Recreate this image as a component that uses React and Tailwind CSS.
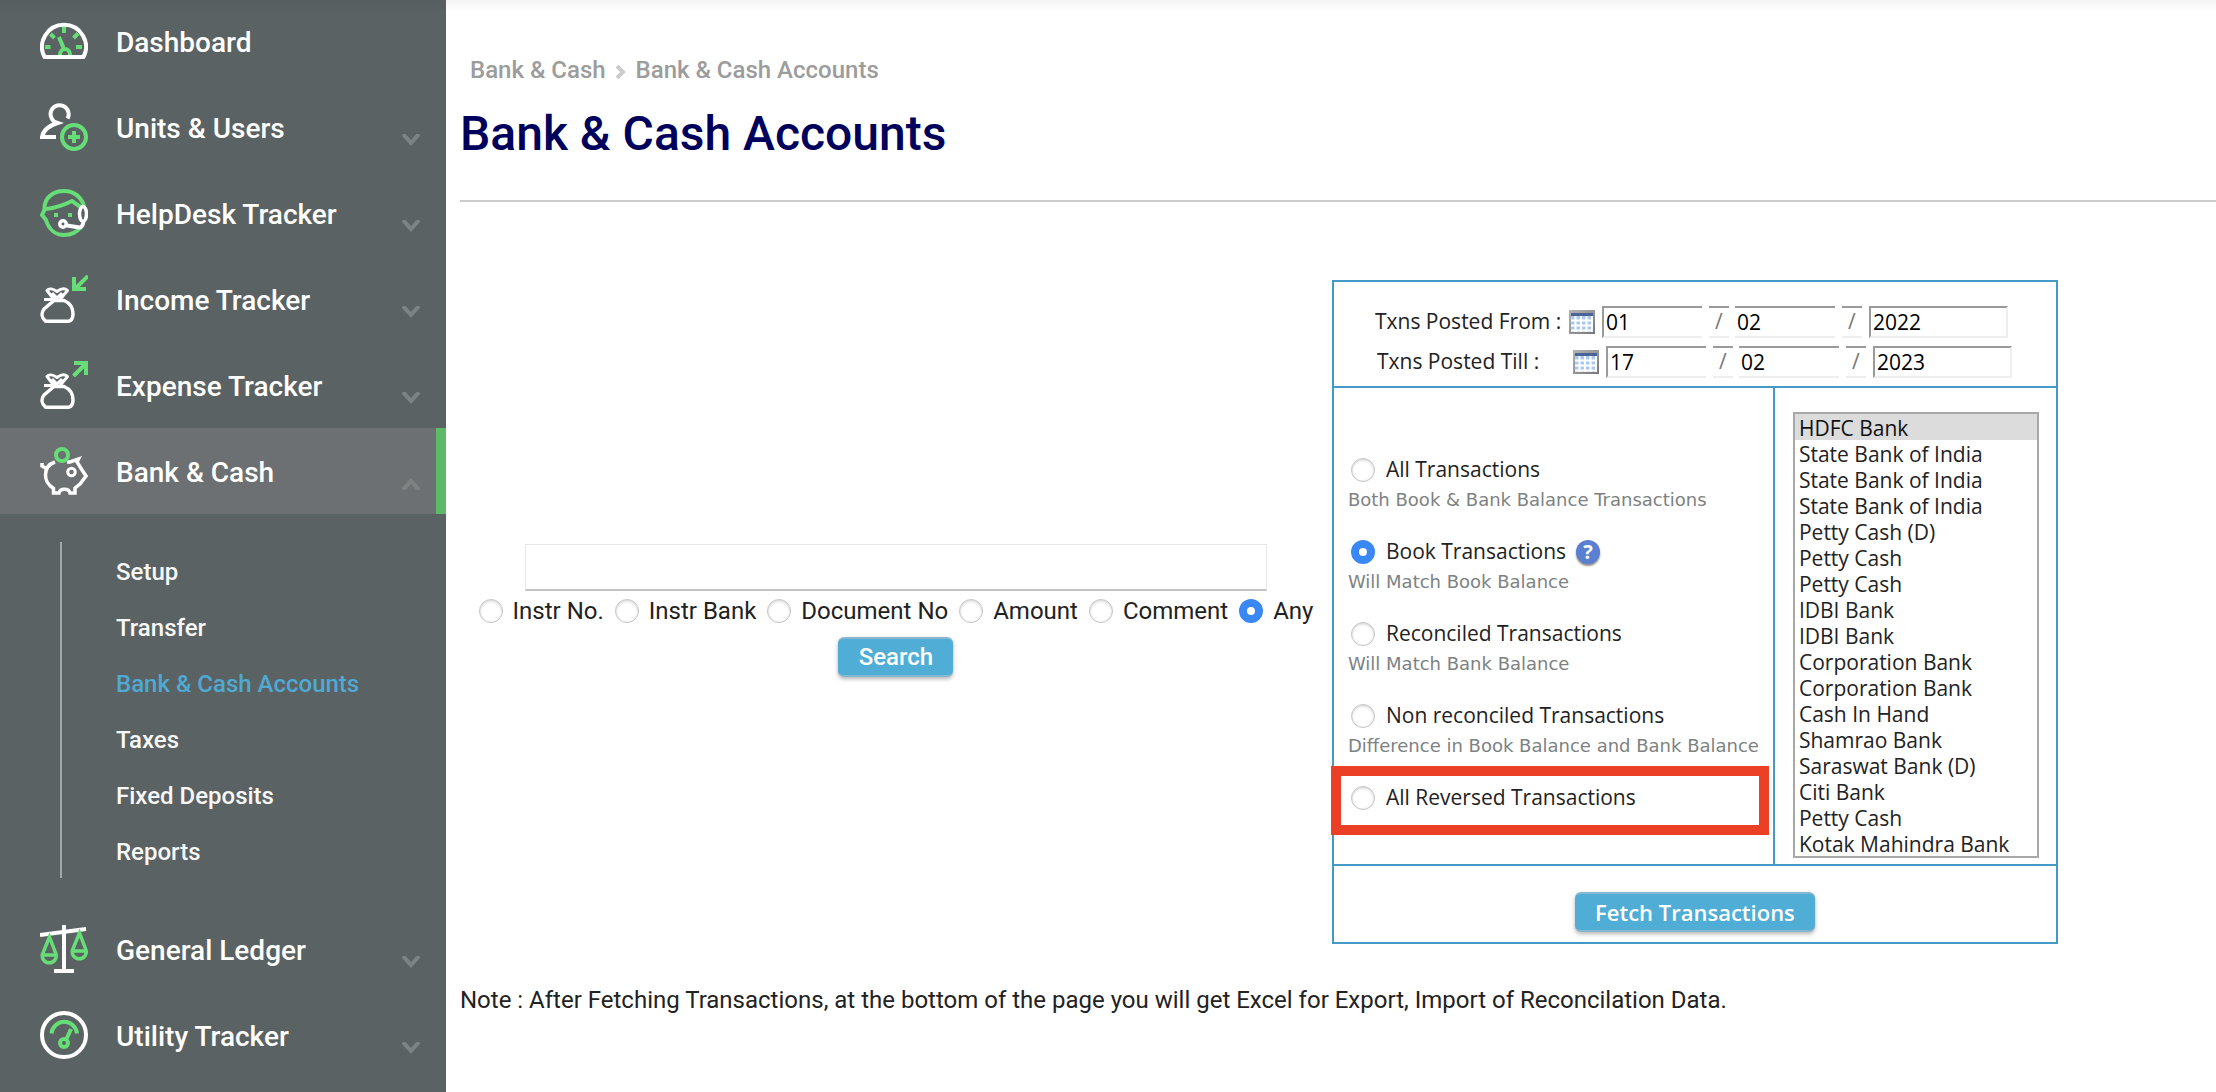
import { useState } from "react";
import clsx from "clsx";

const GREEN = "#66dd77";

function Icon({ children }) {
  return (
    <svg viewBox="0 0 48 48" className="size-12 shrink-0" fill="none" stroke="#fff" strokeWidth="4" aria-hidden="true">
      {children}
    </svg>
  );
}

function DashboardIcon() {
  return (
    <Icon>
      <path d="M4.5 40A22 22 0 1 1 43.5 40Z" strokeLinejoin="round" />
      <g stroke={GREEN}>
        <path d="M24 10v6M5 30h5.5M36 30h6M10.5 17l4 4M33.5 21l4.5-4.5" />
        <path d="M19 20l5 12M20 38c0-8 10-8 10 0" />
      </g>
    </Icon>
  );
}

function UsersIcon() {
  return (
    <Icon>
      <path d="M27.5 15.5A9 9 0 1 0 11.5 15c.8 2.500 3 4 6 5C8 23 3 28 2 34H16" />
      <circle cx="34" cy="34" r="12" stroke={GREEN} />
      <path d="M34 28v12M28 34h12" stroke={GREEN} />
    </Icon>
  );
}

function HelpdeskIcon() {
  return (
    <Icon>
      <g stroke={GREEN}>
        <path d="M44 17C41 7 33 2 24 2 13 2 4 9 4.500 20L4 22l-2 4L6 31c3 10 10 15 18 15 7 0 13-3 17-8" />
        <path d="M6 20c9-1 18-4 26-8l10 7" />
        <path d="M14 26h4M28 26h4" />
      </g>
      <ellipse cx="43" cy="25" rx="3.500" ry="7.500" strokeWidth="3.500" />
      <path d="M43.500 32c-.5 4-2 6.500-4 6.500L27 36.500" />
      <circle cx="23" cy="35" r="3.200" strokeWidth="3.500" />
    </Icon>
  );
}

function Bag() {
  return (
    <g strokeWidth="3.500" strokeLinejoin="round">
      <path d="M14 25.500L4 34c-3 4-2.500 9 1.500 12.200H29c3-1 4-4 4-7.200 0-7-3-11-9-13.500z" />
      <path d="M14 24.500L7 15.500C9 13 13 13.500 17 16.500c4-3 8-3.500 10.500-1L20 24.500M12 18l5 5 5-5M4 24.500h12" strokeWidth="3" />
    </g>
  );
}

function IncomeIcon() {
  return (
    <Icon>
      <Bag />
      <path d="M48 1L35 14M34 2v12h12" stroke={GREEN} />
    </Icon>
  );
}

function ExpenseIcon() {
  return (
    <Icon>
      <Bag />
      <path d="M33.500 15L46 2.500M34 2h12v12" stroke={GREEN} />
    </Icon>
  );
}

function PiggyIcon() {
  return (
    <Icon>
      <g strokeWidth="3.500">
        <path d="M15 15C9 17 5.500 22 5.500 28c0 6 2 9.500 8 13.500V46H19c1-5 10-5 11 0h5v-5l5-4 6-8-4-6-5-8 1.500-3L30 15h-3" />
        <path d="M2 16v3l5 3" />
        <circle cx="31.500" cy="25" r="3.800" strokeWidth="3" />
      </g>
      <circle cx="22" cy="8" r="6" stroke={GREEN} />
    </Icon>
  );
}

function ScalesIcon() {
  return (
    <Icon>
      <path d="M24 0v46M14 46h20M0 10l46-6" />
      <g stroke={GREEN} strokeWidth="3.500">
        <path d="M9.500 12L2.500 29a7 7 0 1 0 13.500 0zM3 30h13" />
        <path d="M39.500 8l-7 17a7 7 0 1 0 13.500 0zM33 26h13" />
      </g>
    </Icon>
  );
}

function GaugeIcon() {
  return (
    <Icon>
      <circle cx="24" cy="24" r="22" />
      <g stroke={GREEN}>
        <path d="M11.500 22.500a12.800 12.800 0 0 1 25.500 0M31 18l-5 11" />
        <circle cx="24" cy="32" r="4" />
      </g>
    </Icon>
  );
}

const MENU_TOP = [
  { label: "Units & Users", icon: UsersIcon },
  { label: "HelpDesk Tracker", icon: HelpdeskIcon },
  { label: "Income Tracker", icon: IncomeIcon },
  { label: "Expense Tracker", icon: ExpenseIcon },
  { label: "Bank & Cash", icon: PiggyIcon, active: true },
];

const MENU_BOTTOM = [
  { label: "General Ledger", icon: ScalesIcon },
  { label: "Utility Tracker", icon: GaugeIcon },
];

const SUBMENU = ["Setup", "Transfer", "Bank & Cash Accounts", "Taxes", "Fixed Deposits", "Reports"];

const SEARCH_FIELDS = ["Instr No.", "Instr Bank", "Document No", "Amount", "Comment", "Any"];

const TXN_TYPES = [
  { label: "All Transactions", hint: "Both Book & Bank Balance Transactions" },
  { label: "Book Transactions", hint: "Will Match Book Balance", help: true },
  { label: "Reconciled Transactions", hint: "Will Match Bank Balance" },
  { label: "Non reconciled Transactions", hint: "Difference in Book Balance and Bank Balance" },
  { label: "All Reversed Transactions", highlight: true },
];

const ACCOUNTS = [
  "HDFC Bank",
  "State Bank of India",
  "State Bank of India",
  "State Bank of India",
  "Petty Cash (D)",
  "Petty Cash",
  "Petty Cash",
  "IDBI Bank",
  "IDBI Bank",
  "Corporation Bank",
  "Corporation Bank",
  "Cash In Hand",
  "Shamrao Bank",
  "Saraswat Bank (D)",
  "Citi Bank",
  "Petty Cash",
  "Kotak Mahindra Bank",
];

function MenuRow({ item }) {
  const ItemIcon = item.icon;
  return (
    <a
      href="#"
      className={clsx(
        "flex h-[86px] items-center pl-10 text-[28px] font-medium text-white",
        item.active ? "border-r-10 border-[#5cba69] bg-[#6c7072] pr-4" : "pr-[26px]"
      )}
    >
      <ItemIcon />
      <span className="ml-7 flex-1 pt-[3px]">{item.label}</span>
      <svg
        viewBox="0 0 18 12"
        className={clsx("mt-[26px] h-3 w-[18px]", item.active && "rotate-180")}
        fill="none"
        stroke="#7d8283"
        strokeWidth="4"
        aria-hidden="true"
      >
        <path d="M1 0l8 9 8-9" />
      </svg>
    </a>
  );
}

function Sidebar() {
  return (
    <nav className="w-[446px] shrink-0 bg-[#5b6263]">
      <a href="#" className="flex h-[84px] items-center pb-0.5 pl-10 text-[28px] font-medium text-white">
        <DashboardIcon />
        <span className="ml-7 pt-[3px]">Dashboard</span>
      </a>
      {MENU_TOP.map((item) => (
        <MenuRow key={item.label} item={item} />
      ))}
      <ul className="my-7 ml-[60px] border-l-2 border-[#a3a6a6]">
        {SUBMENU.map((label) => (
          <li key={label}>
            <a
              href="#"
              className={clsx(
                "flex h-14 items-center pt-[3px] pl-[54px] text-2xl font-medium",
                label === "Bank & Cash Accounts" ? "text-[#4fa9d3]" : "text-[#f7f7f7]"
              )}
            >
              {label}
            </a>
          </li>
        ))}
      </ul>
      {MENU_BOTTOM.map((item) => (
        <MenuRow key={item.label} item={item} />
      ))}
    </nav>
  );
}

function Radio(props) {
  return (
    <input
      type="radio"
      className="size-6 shrink-0 appearance-none rounded-full border border-[#c4c4c4] bg-white shadow-[inset_0_1px_3px_rgba(0,0,0,0.2)] checked:border-8 checked:border-[#3a87f8] checked:shadow-none"
      {...props}
    />
  );
}

function BlueButton({ children, className }) {
  return (
    <button
      type="button"
      className={clsx(
        "h-10 rounded-md border-y-2 border-[#86b7d0] bg-[#4fadd6] leading-none text-white shadow-[0_2px_4px_rgba(0,0,0,0.3)]",
        className
      )}
    >
      {children}
    </button>
  );
}

function SearchPanel() {
  const [field, setField] = useState("Any");

  return (
    <form className="flex min-w-0 flex-1 flex-col items-center pb-1">
      <input
        type="text"
        aria-label="Search"
        className="h-[47px] w-[85%] border border-b-2 border-[#e8e8e8] border-b-[#c2c2c2] px-2 text-2xl"
      />
      <div className="mt-1 flex h-8 items-center gap-[11px] text-2xl whitespace-nowrap">
        {SEARCH_FIELDS.map((name) => (
          <label key={name} className="flex items-center gap-[10px]">
            <Radio name="field" checked={field === name} onChange={() => setField(name)} />
            {name}
          </label>
        ))}
      </div>
      <BlueButton className="mt-[10px] w-[115px] text-2xl font-medium">Search</BlueButton>
    </form>
  );
}

function CalendarIcon() {
  return (
    <svg viewBox="0 0 26 24" className="h-6 w-[26px]" aria-hidden="true">
      <defs>
        <linearGradient id="cal" x1="0" y1="0" x2="1" y2="1">
          <stop offset="0" stopColor="#b5b5b5" />
          <stop offset="1" stopColor="#777" />
        </linearGradient>
      </defs>
      <path d="M0 0h26v24H0z" fill="url(#cal)" />
      <path d="M2 4h22v18H2z" fill="#a9c8f2" />
      <path d="M2 3h22v3H2z" fill="#4a6398" />
      <path d="M6.500 6v16M12 6v16M17.500 6v16M23 6v16M2 10.500h22M2 15.500h22M2 20.500h22" stroke="#fff" strokeWidth="2" />
    </svg>
  );
}

function DateRow({ label, name, day, month, year, className, labelClass }) {
  const box =
    "h-8 border-y-2 border-t-[#9a9a9a] border-b-[#eee] border-l-[#9a9a9a] border-r-[#eee] leading-none font-medium text-black";
  const slash = "flex h-8 w-5 items-center justify-center border-y-2 border-t-[#9a9a9a] border-b-[#eee] text-[#777]";

  return (
    <fieldset className={clsx("whitespace-nowrap", className)}>
      <div className="flex h-8 items-center">
        <span className={labelClass}>{label}</span>
        <button type="button" aria-label={`Pick date: ${name}`}>
          <CalendarIcon />
        </button>
        <input aria-label={`${name} day`} defaultValue={day} className={clsx(box, "ml-[7px] w-[100px] border-l-2 pl-0.5")} />
        <span className={clsx(slash, "ml-[7px]")}>/</span>
        <input aria-label={`${name} month`} defaultValue={month} className={clsx(box, "ml-1.5 w-[100px] pl-0.5")} />
        <span className={clsx(slash, "ml-[7px]")}>/</span>
        <input aria-label={`${name} year`} defaultValue={year} className={clsx(box, "ml-[7px] w-[139px] border-x-2 pl-0.5")} />
      </div>
    </fieldset>
  );
}

function HelpIcon() {
  return (
    <span className="flex size-6 items-center justify-center rounded-full bg-[#5b7fd0] text-xl leading-none font-bold text-white shadow-[0_2px_2px_rgba(0,0,0,0.45)]">
      ?
    </span>
  );
}

function TransactionPanel() {
  const [type, setType] = useState("Book Transactions");

  return (
    <form className="w-[726px] shrink-0 border-2 border-[#4499c8] font-['Open_Sans','Trebuchet_MS',sans-serif] text-[21px] font-medium">
      <div className="flex flex-col gap-2 pt-6 pb-2">
        <DateRow label="Txns Posted From :" name="From" day="01" month="02" year="2022" className="pl-[41px]" labelClass="w-[194px]" />
        <DateRow label="Txns Posted Till :" name="Till" day="17" month="02" year="2023" className="pl-[43px]" labelClass="w-[196px]" />
      </div>

      <div className="flex border-y-2 border-[#4499c8]">
        <ul className="flex flex-1 flex-col gap-[22px] px-[14px] pt-[66px] pb-[50px]">
          {TXN_TYPES.map(({ label, hint, help, highlight }) => (
            <li key={label} className="relative">
              <div className="flex h-8 items-center gap-[10px]">
                <label className="flex items-center gap-[11px] pl-[3px]">
                  <Radio name="type" checked={type === label} onChange={() => setType(label)} />
                  {label}
                </label>
                {help && <HelpIcon />}
              </div>
              {hint && (
                <p className="h-7 font-['DejaVu_Sans',sans-serif] text-lg leading-7 font-normal whitespace-nowrap text-[#7d8282]">
                  {hint}
                </p>
              )}
              {highlight && (
                <div className="pointer-events-none absolute -top-4 -right-[10px] -bottom-[21px] -left-[17px] border-10 border-[#ec4026]" />
              )}
            </li>
          ))}
        </ul>
        <div className="w-[284px] border-l-2 border-[#4499c8] pt-6 pl-[18px]">
          <select
            size={17}
            aria-label="Account"
            defaultValue={0}
            className="h-[446px] w-[246px] overflow-hidden border-2 border-[#a8a8a8] p-0 [scrollbar-width:none]"
          >
            {ACCOUNTS.map((name, i) => (
              <option
                key={i}
                value={i}
                className="h-[26px] px-1 py-0 leading-[26px] checked:bg-[#dcdcdc] checked:bg-[linear-gradient(#dcdcdc,#dcdcdc)]"
              >
                {name}
              </option>
            ))}
          </select>
        </div>
      </div>

      <div className="flex justify-center pt-[26px] pb-[10px]">
        <BlueButton className="w-60 text-[22px] font-semibold">Fetch Transactions</BlueButton>
      </div>
    </form>
  );
}

export default function App() {
  return (
    <div className="relative flex min-h-screen bg-white font-['Roboto',sans-serif] text-[#222]">
      <div className="pointer-events-none absolute inset-x-0 top-0 h-3 bg-linear-to-b from-black/4 to-transparent" />
      <Sidebar />
      <main className="min-w-0 flex-1 pl-[14px]">
        <div className="flex items-center gap-[10px] pt-[54px] pl-[10px] text-2xl leading-8 font-medium text-[#9c9c9c]">
          <a href="#">Bank &amp; Cash</a>
          <svg viewBox="0 0 10 14" className="mt-1 h-[14px] w-[10px]" fill="none" stroke="#ccc" strokeWidth="4" aria-hidden="true">
            <path d="M1 1l6 6-6 6" />
          </svg>
          <a href="#">Bank &amp; Cash Accounts</a>
        </div>
        <h1 className="mt-4 text-5xl leading-[64px] font-medium text-[#00005c]">Bank &amp; Cash Accounts</h1>
        <hr className="mt-[34px] border-t-2 border-[#ccc]" />

        <div className="mt-[78px] flex w-[91%] items-center">
          <SearchPanel />
          <TransactionPanel />
        </div>

        <p className="mt-10 text-2xl leading-8">
          Note : After Fetching Transactions, at the bottom of the page you will get Excel for Export, Import of Reconcilation Data.
        </p>
      </main>
    </div>
  );
}
